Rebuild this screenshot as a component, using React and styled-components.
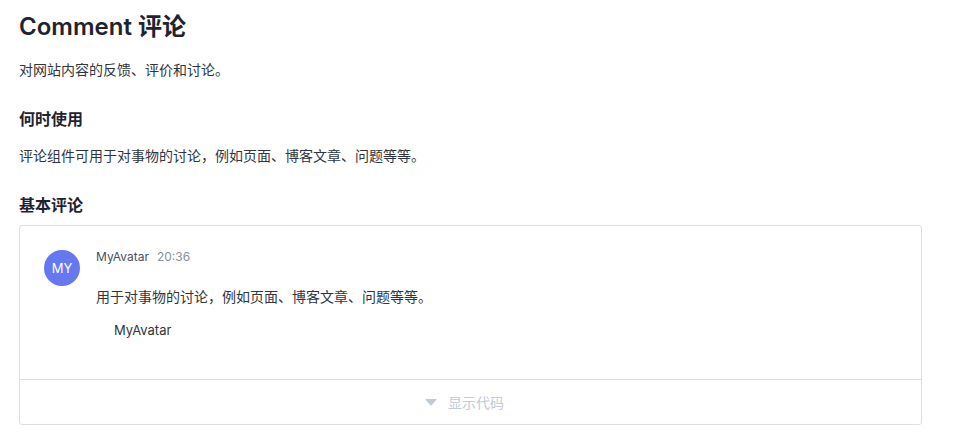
import React from "react";
import styled, { createGlobalStyle } from "styled-components";

const Global = createGlobalStyle`
  html, body { margin: 0; padding: 0; background: #fff; }
  body {
    font-family: Inter, "Noto Sans CJK SC", sans-serif;
    color: #1f2329;
    -webkit-font-smoothing: antialiased;
  }
`;

const Page = styled.div`
  padding: 8px 39px 0 19px;
  display: flex;
  flex-direction: column;
`;

const Title = styled.h1`
  margin: 0;
  font-size: 24px;
  line-height: 38px;
  font-weight: 600;
  color: #1f2330;
`;

const Para = styled.p`
  margin: ${(p) => p.$mt || 0}px 0 0;
  font-size: 14px;
  line-height: 22px;
  color: #303540;
`;

const Heading = styled.h2`
  margin: ${(p) => p.$mt}px 0 0;
  font-size: 16px;
  line-height: 24px;
  font-weight: 600;
  color: #1f2330;
`;

const Card = styled.div`
  margin-top: 8px;
  border: 1px solid #dcdfe6;
  border-radius: 3px;
  display: flex;
  flex-direction: column;
`;

const Demo = styled.div`
  box-sizing: border-box;
  height: 154px;
  padding: 24px 24px 0 24px;
  display: flex;
  gap: 16px;
  border-bottom: 1px solid #dcdfe6;
`;

const Avatar = styled.div`
  width: 36px;
  height: 36px;
  border-radius: 50%;
  background: #6678f0;
  color: #fff;
  font-size: 13px;
  display: flex;
  align-items: center;
  justify-content: center;
  flex-shrink: 0;
`;

const Body = styled.div`
  display: flex;
  flex-direction: column;
`;

const Meta = styled.div`
  display: flex;
  gap: 8px;
  font-size: 12px;
  line-height: 14px;
`;

const Author = styled.span`
  color: #4a4f5a;
`;

const Time = styled.span`
  color: #8a8f99;
`;

const Content = styled.div`
  margin-top: 22px;
  font-size: 14px;
  line-height: 22px;
  color: #303540;
`;

const Action = styled.div`
  margin-top: 11px;
  padding-left: 18px;
  font-size: 13px;
  line-height: 22px;
  color: #303540;
`;

const Footer = styled.div`
  height: 44px;
  padding-right: 12px;
  display: flex;
  align-items: center;
  justify-content: center;
  gap: 11px;
  color: #c3cad6;
  font-size: 14px;
`;

const Triangle = styled.span`
  width: 0;
  height: 0;
  border-left: 6px solid transparent;
  border-right: 6px solid transparent;
  border-top: 7px solid #c3cad6;
`;

export default function App() {
  return (
    <>
      <Global />
      <Page>
        <Title>Comment 评论</Title>
        <Para $mt={13}>对网站内容的反馈、评价和讨论。</Para>
        <Heading $mt={26}>何时使用</Heading>
        <Para $mt={14}>评论组件可用于对事物的讨论，例如页面、博客文章、问题等等。</Para>
        <Heading $mt={26}>基本评论</Heading>
        <Card>
          <Demo>
            <Avatar>MY</Avatar>
            <Body>
              <Meta>
                <Author>MyAvatar</Author>
                <Time>20:36</Time>
              </Meta>
              <Content>用于对事物的讨论，例如页面、博客文章、问题等等。</Content>
              <Action>MyAvatar</Action>
            </Body>
          </Demo>
          <Footer>
            <Triangle />
            显示代码
          </Footer>
        </Card>
      </Page>
    </>
  );
}
